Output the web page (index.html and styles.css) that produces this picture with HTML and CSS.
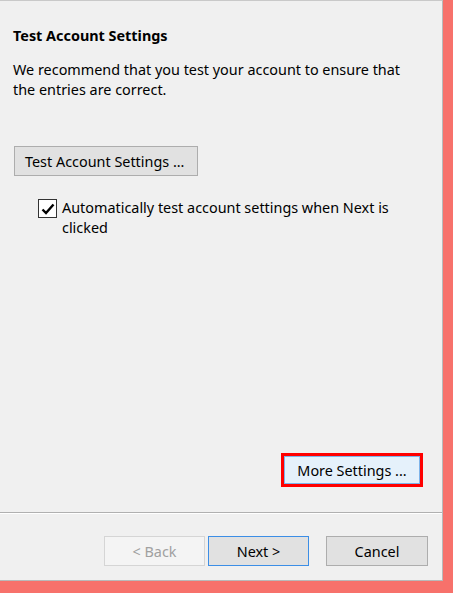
FILE: index.html
```html
<!DOCTYPE html>
<html>
<head>
<meta charset="utf-8">
<link rel="stylesheet" href="styles.css">
</head>
<body>
<div class="window">
  <div class="content">
    <h1 class="title">Test Account Settings</h1>
    <p class="desc">We recommend that you test your account to ensure that the entries are correct.</p>
    <button class="btn test-btn">Test Account Settings ...</button>
    <label class="check-row">
      <span class="checkbox">
        <svg width="14" height="14" viewBox="0 0 14 14"><path d="M1.5 7.5 L5 11 L12.5 2.5" fill="none" stroke="#000" stroke-width="2.4"/></svg>
      </span>
      <span class="check-label">Automatically test account settings when Next is clicked</span>
    </label>
    <div class="spacer"></div>
    <div class="more-row">
      <div class="highlight"><button class="btn more-btn">More Settings ...</button></div>
    </div>
  </div>
  <div class="separator"></div>
  <div class="footer">
    <button class="btn back-btn">&lt; Back</button>
    <button class="btn next-btn">Next &gt;</button>
    <button class="btn cancel-btn">Cancel</button>
  </div>
</div>
</body>
</html>
```
FILE: styles.css
```css
html, body {
  margin: 0;
  padding: 0;
}
body {
  background: #f7716b;
  width: 453px;
  height: 593px;
  font-family: "Noto Sans", "Open Sans", sans-serif;
  font-size: 14.4px;
  color: #000;
}
.window {
  box-sizing: border-box;
  width: 443px;
  height: 581px;
  background: #f0f0f0;
  border-top: 1px solid #c9c9c9;
  border-right: 1px solid #b9b9b9;
  border-bottom: 1px solid #b9b9b9;
  display: flex;
  flex-direction: column;
}
.content {
  flex: 1;
  display: flex;
  flex-direction: column;
  padding: 0 0 0 13px;
}
.title {
  margin: 25px 0 0 0;
  font-size: 14.4px;
  font-weight: bold;
  line-height: 20px;
}
.desc {
  margin: 14px 0 0 0;
  line-height: 20px;
  width: 400px;
}
.btn {
  font-family: inherit;
  font-size: 14.4px;
  color: #000;
  box-sizing: border-box;
  height: 30px;
  border: 1px solid #adadad;
  background: #e1e1e1;
  padding: 0;
  margin: 0;
}
.test-btn {
  margin: 46px 0 0 1px;
  width: 184px;
  text-align: left;
  padding-left: 10px;
}
.check-row {
  display: flex;
  margin: 22px 0 0 25px;
  align-items: flex-start;
}
.checkbox {
  box-sizing: border-box;
  width: 19px;
  height: 19px;
  border: 1px solid #333;
  background: #fff;
  display: flex;
  align-items: center;
  justify-content: center;
  margin-top: 1px;
  flex: none;
}
.check-label {
  margin-left: 5px;
  line-height: 20px;
  width: 350px;
}
.spacer {
  flex: 1;
}
.more-row {
  display: flex;
  justify-content: flex-end;
  padding-right: 19px;
  margin-bottom: 25px;
}
.highlight {
  border: 3px solid #ff0000;
  display: flex;
}
.more-btn {
  width: 136px;
  height: 28px;
  background: #e5f1fb;
  border: 1px solid #7eb4ea;
}
.separator {
  height: 1px;
  background: #b0b0b0;
  border-bottom: 1px solid #ffffff;
}
.footer {
  display: flex;
  padding: 22px 0 0 104px;
  height: 44px;
}
.back-btn {
  width: 101px;
  background: #f4f4f4;
  border-color: #d5d5d5;
  color: #a0a0a0;
}
.next-btn {
  width: 101px;
  margin-left: 3px;
  border-color: #3c8ee6;
}
.cancel-btn {
  width: 102px;
  margin-left: 17px;
}
```
